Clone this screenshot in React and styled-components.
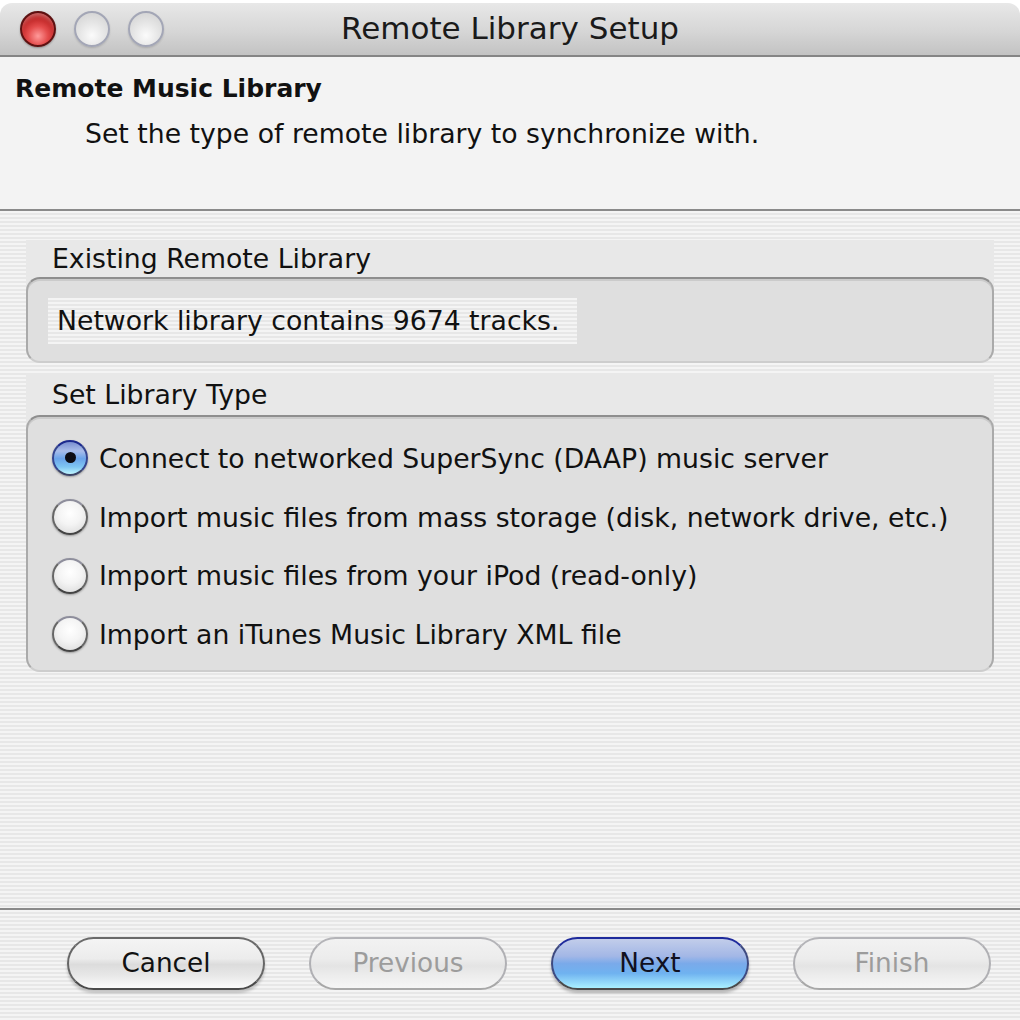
import React from 'react';
import styled, { createGlobalStyle, css } from 'styled-components';

const GlobalStyle = createGlobalStyle`
  html, body {
    margin: 0;
    padding: 0;
    background: #ffffff;
  }
  body {
    font-family: "DejaVu Sans", "Liberation Sans", sans-serif;
    color: #111;
  }
`;

const pinstripe = css`
  background: repeating-linear-gradient(
    to bottom,
    #f4f4f4 0px,
    #f4f4f4 2px,
    #e7e7e7 2px,
    #e7e7e7 4px
  );
`;

const Window = styled.div`
  width: 1020px;
  height: 1020px;
  display: flex;
  flex-direction: column;
  overflow: hidden;
  box-sizing: border-box;
  padding-top: 3px;
`;

const TitleBar = styled.div`
  height: 52px;
  flex-shrink: 0;
  display: grid;
  grid-template-columns: 1fr auto 1fr;
  align-items: center;
  padding-left: 20px;
  border-radius: 12px 12px 0 0;
  border-bottom: 2px solid #858585;
  background: linear-gradient(
    to bottom,
    #e8e8e8 0%,
    #dedede 30%,
    #d6d6d6 55%,
    #cdcdcd 75%,
    #c3c3c3 100%
  );
`;

const Lights = styled.div`
  display: flex;
  gap: 18px;
`;

const Light = styled.span`
  width: 36px;
  height: 36px;
  border-radius: 50%;
  box-sizing: border-box;
  ${(p) =>
    p.$close
      ? css`
          border: 2px solid #5e1212;
          background: radial-gradient(circle at 50% 72%, #ff9a9a 0%, #e44c4c 35%, #b81e1e 70%, #8a1010 100%);
          box-shadow: inset 0 5px 4px -2px rgba(255, 255, 255, 0.35), 0 1px 2px rgba(0, 0, 0, 0.3);
        `
      : css`
          border: 2px solid #a3a6b6;
          background: radial-gradient(circle at 50% 70%, #fbfbfb 0%, #e6e6e6 45%, #cfcfcf 100%);
          box-shadow: 0 1px 2px rgba(0, 0, 0, 0.15);
        `}
`;

const WindowTitle = styled.div`
  font-size: 31px;
  color: #1a1a1a;
  white-space: nowrap;
  padding-right: 20px;
  padding-bottom: 2px;
`;

const Header = styled.div`
  height: 154px;
  flex-shrink: 0;
  padding: 16px 15px 0;
  box-sizing: border-box;
  background: #f3f3f3;
  border-bottom: 2px solid #8a8a8a;
`;

const HeaderTitle = styled.div`
  font-weight: bold;
  font-size: 25px;
  line-height: 32px;
  color: #111;
`;

const HeaderText = styled.div`
  font-size: 26.7px;
  line-height: 32px;
  margin-top: 13px;
  padding-left: 70px;
  color: #111;
`;

const Body = styled.div`
  flex: 1;
  ${pinstripe};
  padding: 29px 26px 0;
  display: flex;
  flex-direction: column;
`;

const Group = styled.section`
  display: flex;
  flex-direction: column;
  background: #e8e8e8;
  border-radius: 0 0 14px 14px;
  margin-top: ${(p) => p.$gap || 0}px;
`;

const GroupLabel = styled.div`
  height: ${(p) => p.$height}px;
  line-height: ${(p) => p.$height}px;
  padding-left: 26px;
  font-size: 26.7px;
  color: #111;
  padding-top: ${(p) => p.$offset || 0}px;
`;

const Box = styled.div`
  box-sizing: border-box;
  height: ${(p) => p.$height}px;
  border-radius: 14px;
  background: #dfdfdf;
  border: 2px solid;
  border-color: #8e8e8e #aaaaaa #cdcdcd #aaaaaa;
  box-shadow: inset 0 2px 0 #cbcbcb;
  padding: ${(p) => p.$pad};
  display: flex;
  flex-direction: column;
`;

const Field = styled.div`
  width: 529px;
  height: 46px;
  box-sizing: border-box;
  padding-left: 9px;
  line-height: 46px;
  font-size: 26.7px;
  color: #111;
  ${pinstripe};
`;

const Option = styled.label`
  height: 58.7px;
  display: flex;
  align-items: center;
  gap: 11px;
  font-size: 26.7px;
  color: #111;
`;

const Radio = styled.span`
  position: relative;
  width: 36px;
  height: 36px;
  flex-shrink: 0;
  box-sizing: border-box;
  border-radius: 50%;
  border: 2px solid;
  box-shadow: 0 1px 2px rgba(0, 0, 0, 0.3);
  ${(p) =>
    p.$checked
      ? css`
          border-color: #1c2a8e #34448e #3c4466 #34448e;
          background: linear-gradient(
            to bottom,
            #7a8fd0 0%,
            #a9bdea 28%,
            #6aa3ea 52%,
            #7fc6f3 78%,
            #bff6ff 100%
          );
          &::after {
            content: '';
            position: absolute;
            left: 50%;
            top: 50%;
            width: 11px;
            height: 11px;
            margin: -6px 0 0 -5.5px;
            border-radius: 50%;
            background: #0c0c14;
          }
        `
      : css`
          border-color: #8e8e9c #666 #444 #666;
          background: radial-gradient(circle at 50% 38%, #ffffff 0%, #f4f4f4 45%, #d6d6d6 100%);
        `}
`;

const Footer = styled.div`
  height: 112px;
  flex-shrink: 0;
  box-sizing: border-box;
  border-top: 2px solid #8a8a8a;
  ${pinstripe};
  padding: 27px 0 0 67px;
  display: flex;
  gap: 44px;
`;

const Button = styled.button`
  width: 198px;
  height: 53px;
  border-radius: 27px;
  border: 2px solid;
  font-family: "DejaVu Sans", "Liberation Sans", sans-serif;
  font-size: 26.3px;
  padding: 0 0 2px;
  box-sizing: border-box;
  ${(p) =>
    p.$variant === 'default'
      ? css`
          color: #101020;
          border-color: #1e2a9c #3e4a80 #4a4a4a #3e4a80;
          background: linear-gradient(
            to bottom,
            #c2cdea 0%,
            #a3b7e6 35%,
            #7aaaea 50%,
            #6fb2f0 70%,
            #aaf0ff 100%
          );
          box-shadow: 0 3px 3px rgba(0, 0, 0, 0.25);
        `
      : p.$variant === 'disabled'
      ? css`
          color: #9c9c9c;
          border-color: #b4b4b8 #b0b0b4 #a8a8a8 #b0b0b4;
          background: linear-gradient(
            to bottom,
            #f2f2f2 0%,
            #ececec 40%,
            #e4e4e4 55%,
            #ededed 75%,
            #f6f6f6 100%
          );
        `
      : css`
          color: #111;
          border-color: #6a6a6a #666 #4a4a4a #666;
          background: linear-gradient(
            to bottom,
            #f4f4f4 0%,
            #ececec 40%,
            #dcdcdc 52%,
            #e8e8e8 75%,
            #fbfbfb 100%
          );
          box-shadow: 0 3px 3px rgba(0, 0, 0, 0.2);
        `}
`;

const options = [
  'Connect to networked SuperSync (DAAP) music server',
  'Import music files from mass storage (disk, network drive, etc.)',
  'Import music files from your iPod (read-only)',
  'Import an iTunes Music Library XML file',
];

export default function App() {
  return (
    <>
      <GlobalStyle />
      <Window>
        <TitleBar>
          <Lights>
            <Light $close />
            <Light />
            <Light />
          </Lights>
          <WindowTitle>Remote Library Setup</WindowTitle>
          <div />
        </TitleBar>
        <Header>
          <HeaderTitle>Remote Music Library</HeaderTitle>
          <HeaderText>Set the type of remote library to synchronize with.</HeaderText>
        </Header>
        <Body>
          <Group>
            <GroupLabel $height={37}>Existing Remote Library</GroupLabel>
            <Box $height={86} $pad="19px 0 0 20px">
              <Field>Network library contains 9674 tracks.</Field>
            </Box>
          </Group>
          <Group $gap={10}>
            <GroupLabel $height={40} $offset={2}>Set Library Type</GroupLabel>
            <Box $height={257} $pad="12px 0 0 24px">
              {options.map((text, i) => (
                <Option key={text}>
                  <Radio $checked={i === 0} />
                  {text}
                </Option>
              ))}
            </Box>
          </Group>
        </Body>
        <Footer>
          <Button>Cancel</Button>
          <Button $variant="disabled">Previous</Button>
          <Button $variant="default">Next</Button>
          <Button $variant="disabled">Finish</Button>
        </Footer>
      </Window>
    </>
  );
}
